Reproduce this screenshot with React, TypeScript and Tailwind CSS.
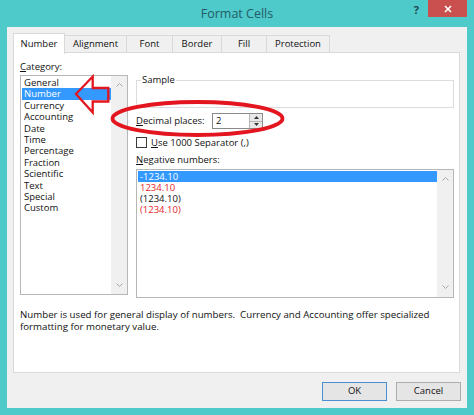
import React from "react";

const categories = [
  "General",
  "Number",
  "Currency",
  "Accounting",
  "Date",
  "Time",
  "Percentage",
  "Fraction",
  "Scientific",
  "Text",
  "Special",
  "Custom",
];

const negatives: { text: string; red: boolean }[] = [
  { text: "-1234.10", red: false },
  { text: "1234.10", red: true },
  { text: "(1234.10)", red: false },
  { text: "(1234.10)", red: true },
];

function Chevron({ down }: { down?: boolean }) {
  return (
    <svg width="7" height="4" viewBox="0 0 7 4" className="block">
      <path
        d={down ? "M0.5 0.5 L3.5 3.5 L6.5 0.5" : "M0.5 3.5 L3.5 0.5 L6.5 3.5"}
        fill="none"
        stroke="#a8a8a8"
        strokeWidth="1"
      />
    </svg>
  );
}

function Tab({ label, w, active }: { label: string; w: string; active?: boolean }) {
  if (active) {
    return (
      <div
        className={`${w} h-[21px] bg-white border-l border-t border-r border-[#d9d9d9] flex items-center justify-center relative z-10`}
      >
        <span className="leading-[12px] -mt-[1px]">{label}</span>
      </div>
    );
  }
  return (
    <div
      className={`${w} h-[17px] mt-[2px] bg-[#f0f0f0] border-t border-r border-[#d9d9d9] flex items-center justify-center`}
    >
      <span className="leading-[12px]">{label}</span>
    </div>
  );
}

export default function App() {
  return (
    <div
      className="relative w-[474px] h-[415px] bg-[#4fcaca] flex flex-col text-[9.5px] text-[#111111] overflow-hidden"
      style={{ fontFamily: '"Open Sans", "Noto Sans", sans-serif' }}
    >
      {/* Title bar */}
      <div className="h-[27px] grid grid-cols-[1fr_auto_1fr] shrink-0">
        <div />
        <div className="text-[12.5px] text-[#245c66] leading-[27px]">Format Cells</div>
        <div className="flex justify-end items-start pr-[7px]">
          <span className="mt-[3px] mr-[9px] text-[11px] font-bold text-[#1d4650] leading-[14px]">?</span>
          <div className="w-[39px] h-[17px] bg-[#c9504f] flex items-center justify-center">
            <svg width="8" height="8" viewBox="0 0 8 8">
              <path d="M1 1 L7 7 M7 1 L1 7" stroke="#ffffff" strokeWidth="1.6" />
            </svg>
          </div>
        </div>
      </div>

      {/* Dialog body */}
      <div className="mx-[7px] h-[381px] bg-[#f0f0f0] flex flex-col pt-[6px] px-[6px]">
        {/* Tabs */}
        <div className="flex items-start h-[20px] -mb-px">
          <Tab label="Number" w="w-[52px]" active />
          <Tab label="Alignment" w="w-[62px]" />
          <Tab label="Font" w="w-[46px]" />
          <Tab label="Border" w="w-[49px]" />
          <Tab label="Fill" w="w-[45px]" />
          <Tab label="Protection" w="w-[63px]" />
        </div>

        {/* Panel */}
        <div className="mr-[1px] h-[321px] bg-white border border-[#d9d9d9] pt-[8px] pl-[6px] flex flex-col">
          <div className="flex gap-[8px]">
            {/* Left column */}
            <div className="w-[108px] flex flex-col">
              <div className="leading-[12px]">
                <u className="underline-offset-1">C</u>ategory:
              </div>
              <div className="mt-[2px] h-[220px] border border-[#b7b7b7] bg-white flex">
                <div className="flex-1 pt-[1px] pl-[1px]">
                  {categories.map((c) => (
                    <div
                      key={c}
                      className={`h-[11.4px] leading-[11.4px] pl-[2px] ${
                        c === "Number" ? "bg-[#3399ff] text-white" : ""
                      }`}
                    >
                      {c}
                    </div>
                  ))}
                </div>
                <div className="w-[16px] bg-[#f0f0f0] flex flex-col items-center justify-between pt-[7px] pb-[7px]">
                  <Chevron />
                  <Chevron down />
                </div>
              </div>
            </div>

            {/* Right column */}
            <div className="w-[318px] flex flex-col">
              <div className="mt-[19px] h-[28px] border border-[#dcdcdc]">
                <div className="-mt-[7px] ml-[4px] w-fit bg-white px-[1px] leading-[12px]">Sample</div>
              </div>

              <div className="mt-[5px] h-[16px] flex items-center">
                <div className="w-[76px]">
                  <u className="underline-offset-1">D</u>ecimal places:
                </div>
                <div className="w-[51px] h-[16px] border border-[#8a8a8a] bg-white flex">
                  <div className="flex-1 pl-[3px] leading-[14px]">2</div>
                  <div className="w-[13px] flex flex-col border-l border-[#b5b5b5] bg-[#e8e8e8]">
                    <div className="flex-1 flex items-center justify-center border-b border-[#b5b5b5]">
                      <svg width="5" height="3" viewBox="0 0 5 3">
                        <path d="M0 3 L2.5 0 L5 3 Z" fill="#333" />
                      </svg>
                    </div>
                    <div className="flex-1 flex items-center justify-center">
                      <svg width="5" height="3" viewBox="0 0 5 3">
                        <path d="M0 0 L2.5 3 L5 0 Z" fill="#333" />
                      </svg>
                    </div>
                  </div>
                </div>
              </div>

              <div className="mt-[8px] h-[11px] flex items-center gap-[4px]">
                <div className="w-[11px] h-[11px] border border-[#3a3a3a] bg-white" />
                <div className="leading-[12px]">
                  <u className="underline-offset-1">U</u>se 1000 Separator (,)
                </div>
              </div>

              <div className="mt-[6px] leading-[12px]">
                <u className="underline-offset-1">N</u>egative numbers:
              </div>

              <div className="mt-[3px] h-[129px] border border-[#b7b7b7] bg-white flex">
                <div className="flex-1 pt-[1px] pl-[1px]">
                  {negatives.map((n, i) => (
                    <div
                      key={i}
                      className={`h-[11px] leading-[11px] pl-[2px] ${
                        i === 0 ? "bg-[#3399ff] text-white" : n.red ? "text-[#e5252d]" : ""
                      }`}
                    >
                      {n.text}
                    </div>
                  ))}
                </div>
                <div className="w-[16px] bg-[#f0f0f0] flex flex-col items-center justify-between pt-[7px] pb-[8px]">
                  <Chevron />
                  <Chevron down />
                </div>
              </div>
            </div>
          </div>

          <div className="mt-[11px] leading-[11.5px] text-[9.7px]">
            Number is used for general display of numbers.&nbsp; Currency and Accounting offer specialized
            <br />
            formatting for monetary value.
          </div>
        </div>

        {/* Buttons */}
        <div className="mt-[9px] flex justify-end gap-[9px]">
          <div className="w-[65px] h-[19px] border border-[#4a90d0] bg-[#e5e5e5] flex items-center justify-center">
            OK
          </div>
          <div className="w-[65px] h-[19px] border border-[#adadad] bg-[#e5e5e5] flex items-center justify-center">
            Cancel
          </div>
        </div>
      </div>

      {/* Red annotations drawn over the dialog */}
      <svg
        className="absolute inset-0 pointer-events-none"
        width="474"
        height="415"
        viewBox="0 0 474 415"
      >
        <ellipse cx="197.5" cy="118.5" rx="85" ry="16.5" fill="none" stroke="#e3151f" strokeWidth="3.8" />
        <path
          d="M76 94 L92.7 76.5 L92.7 88 L108.3 88 L108.3 101.5 L92.7 101.5 L92.7 112.5 Z"
          fill="none"
          stroke="#e3151f"
          strokeWidth="2.3"
          strokeLinejoin="miter"
        />
      </svg>
    </div>
  );
}
